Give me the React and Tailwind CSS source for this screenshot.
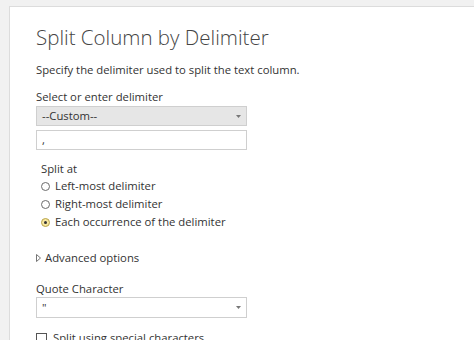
import React from 'react';

const font = { fontFamily: '"Open Sans", "Noto Sans", sans-serif' };

function Caret() {
    return (
        <svg width="5" height="3" viewBox="0 0 5 3" className="text-[#777]">
            <path d="M0 0 L5 0 L2.5 3 Z" fill="currentColor" />
        </svg>
    );
}

function Radio({ checked, label }) {
    return (
        <div className="flex items-center h-[18px]">
            <span className={`w-[9px] h-[9px] rounded-full border flex items-center justify-center ${checked ? 'border-[#b8a44a] bg-[#f7e7a0]' : 'border-[#6b6b6b] bg-white'}`}>
                {checked && <span className="w-[3px] h-[3px] rounded-full bg-[#333]" />}
            </span>
            <span className="ml-[5px]">{label}</span>
        </div>
    );
}

export default function App() {
    return (
        <div className="w-[474px] h-[340px] overflow-hidden bg-[#f1f1f1] pt-[6px] pl-[9px]" style={font}>
            <div className="h-full bg-white border-l border-t border-[#dcdcdc] pl-[26px] text-[#333] text-[11.3px]">
                {/* Title */}
                <h1 className="text-[20.5px] font-light text-[#444] leading-[21px] pt-[20px]">
                    Split Column by Delimiter
                </h1>
                <p className="mt-[14px] leading-[16px]">Specify the delimiter used to split the text column.</p>

                <div className="mt-[11px] leading-[16px]">Select or enter delimiter</div>
                <div className="mt-[1px] w-[211px] h-[20px] bg-[#e6e6e6] border border-[#cfcfcf] flex items-center justify-between px-[5px]">
                    <span>--Custom--</span>
                    <Caret />
                </div>
                <div className="mt-[4px] w-[211px] h-[20px] bg-white border border-[#cfcfcf] flex items-center px-[5px]">
                    <span className="leading-none">,</span>
                </div>

                {/* Split at */}
                <div className="mt-[11px] pl-[5px] leading-[16px]">Split at</div>
                <div className="pl-[5px]">
                    <Radio label="Left-most delimiter" />
                    <Radio label="Right-most delimiter" />
                    <Radio checked label="Each occurrence of the delimiter" />
                </div>

                {/* Advanced */}
                <div className="mt-[19px] flex items-center h-[16px]">
                    <svg width="5" height="8" viewBox="0 0 5 8" className="mr-[4px]">
                        <path d="M0.5 0.5 L4.5 4 L0.5 7.5 Z" fill="none" stroke="#666" strokeWidth="0.9" />
                    </svg>
                    <span>Advanced options</span>
                </div>

                <div className="mt-[15px] leading-[16px]">Quote Character</div>
                <div className="w-[211px] h-[21px] bg-white border border-[#cfcfcf] flex items-center justify-between px-[5px]">
                    <span className="leading-none">"</span>
                    <Caret />
                </div>

                <div className="mt-[13px] flex items-center h-[14px]">
                    <span className="w-[11px] h-[11px] border border-[#555] bg-white shrink-0" />
                    <span className="ml-[6px] leading-[14px]">Split using special characters</span>
                </div>
            </div>
        </div>
    );
}
